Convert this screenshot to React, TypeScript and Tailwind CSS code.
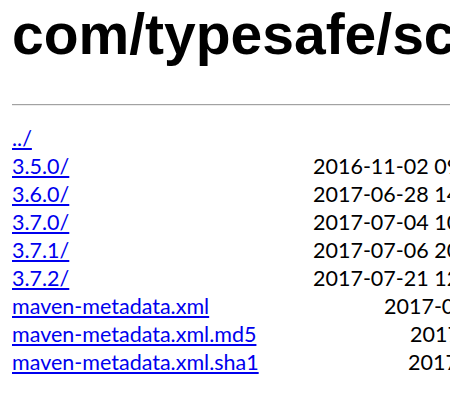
const entries = [
  { name: "../", date: "", col: "" },
  { name: "3.5.0/", date: "2016-11-02 09:41", col: "w-[301px]" },
  { name: "3.6.0/", date: "2017-06-28 14:20", col: "w-[301px]" },
  { name: "3.7.0/", date: "2017-07-04 10:05", col: "w-[301px]" },
  { name: "3.7.1/", date: "2017-07-06 20:33", col: "w-[301px]" },
  { name: "3.7.2/", date: "2017-07-21 12:58", col: "w-[301px]" },
  { name: "maven-metadata.xml", date: "2017-07-21 12:58", col: "w-[372px]" },
  { name: "maven-metadata.xml.md5", date: "2017-07-21 12:58", col: "w-[398px]" },
  { name: "maven-metadata.xml.sha1", date: "2017-07-21 12:58", col: "w-[396px]" },
]

export default function App() {
  return (
    <div className="w-[450px] h-[397px] overflow-hidden bg-white pl-[12px] whitespace-nowrap">
      <h1 className="mt-[6px] text-[57px] leading-[57px] font-bold text-black font-['Liberation_Sans',Arial,sans-serif]">
        com/typesafe/scala-logging/scala-logging_2.12/
      </h1>

      <hr className="mt-[41px] h-[2px] border-0 border-t border-b border-t-[#a2a2a2] border-b-[#ececec]" />

      <pre className="mt-[18px] text-[21.5px] leading-[28px] text-black font-['Lato',sans-serif]">
        {entries.map((e) => (
          <div key={e.name} className="flex">
            <div className={"shrink-0 " + e.col}>
              <a href="#" className="text-[#0000ee] underline">
                {e.name}
              </a>
            </div>
            {e.date && <span className="shrink-0">{e.date}                   -</span>}
          </div>
        ))}
      </pre>
    </div>
  )
}
